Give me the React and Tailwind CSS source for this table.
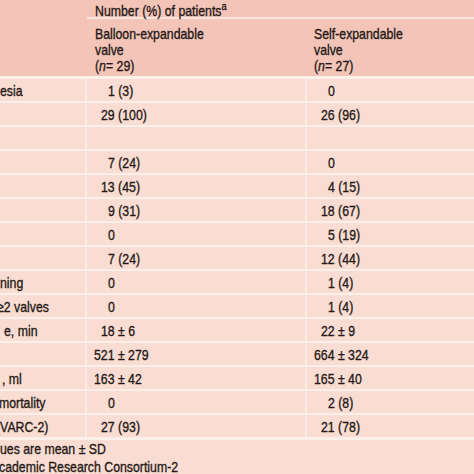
import React from 'react';

// values are indented so the integer parts line up, like the printed table
const PAD = { 1: 'pl-[21px]', 2: 'pl-[14px]', 3: 'pl-[7px]' };

// condensed face: no narrow font installed, so squeeze Liberation Sans
const Nar = ({ className = '', children }) => (
  <span className={`inline-block origin-left scale-x-[0.82] whitespace-nowrap ${className}`}>{children}</span>
);

const rows = [
  { label: 'esia', a: '1 (3)', b: '0' },
  { a: '29 (100)', b: '26 (96)' },
  {},
  { a: '7 (24)', b: '0' },
  { a: '13 (45)', b: '4 (15)' },
  { a: '9 (31)', b: '18 (67)' },
  { a: '0', b: '5 (19)' },
  { a: '7 (24)', b: '12 (44)' },
  { label: 'ning', a: '0', b: '1 (4)' },
  { label: '≥2 valves', a: '0', b: '1 (4)', shift: '-ml-[3px]' },
  { label: 'e, min', a: '18 ± 6', b: '22 ± 9', shift: 'ml-[4px]' },
  { a: '521 ± 279', b: '664 ± 324' },
  { label: ', ml', a: '163 ± 42', b: '165 ± 40', shift: 'ml-[2px]' },
  { label: 'mortality', a: '0', b: '2 (8)', shift: '-ml-[1px]' },
  { label: '(VARC-2)', a: '27 (93)', b: '21 (78)', shift: '-ml-[4px]' },
];

const Value = ({ v }) => {
  if (!v) return null;
  const digits = v.match(/^\d+/)[0].length;
  return (
    <div className={PAD[digits]}>
      <Nar>{v}</Nar>
    </div>
  );
};

export default function App() {
  return (
    <div className="w-[474px] h-[474px] overflow-hidden bg-[#f9ddd2] text-[#251815] text-[15px] [-webkit-text-stroke:0.35px_#251815] font-['Liberation_Sans',Arial,sans-serif]">
      {/* Header */}
      <div className="flex h-[79px] bg-[#f3c5b8] border-b-[3px] border-[#fdf0ea]">
        <div className="w-[87px] shrink-0" />
        <div className="flex-1 flex flex-col">
          <div className="h-[19px] border-b-2 border-[#fbe4dc] pl-[8px] leading-[21px]">
            <Nar>
              Number (%) of patients<sup>a</sup>
            </Nar>
          </div>
          <div className="flex flex-1">
            <div className="w-[220px] shrink-0 pl-[8px] pt-[7px] leading-[16px]">
              <Nar>
                Balloon-expandable
                <br />
                valve
                <br />(<i>n</i>= 29)
              </Nar>
            </div>
            <div className="flex-1 pl-[7px] pt-[7px] leading-[16px]">
              <Nar>
                Self-expandable
                <br />
                valve
                <br />(<i>n</i>= 27)
              </Nar>
            </div>
          </div>
        </div>
      </div>

      {/* Body rows */}
      {rows.map((r, i) => (
        <div
          key={i}
          className={`flex h-[24px] leading-[23px] border-[#fdf0ea] ${
            i === rows.length - 1 ? 'h-[25px] border-b-[3px]' : 'border-b-2'
          }`}
        >
          <div className="w-[87px] shrink-0 border-r-2 border-[#fcebe4] overflow-hidden">
            {r.label && <Nar className={r.shift || ''}>{r.label}</Nar>}
          </div>
          <div className="w-[220px] shrink-0 border-r-2 border-[#fcebe4]">
            <Value v={r.a} />
          </div>
          <div className="flex-1">
            <Value v={r.b} />
          </div>
        </div>
      ))}

      {/* Footnotes */}
      <div className="leading-[18px]">
        <div>
          <Nar>ues are mean ± SD</Nar>
        </div>
        <div>
          <Nar className="-ml-[1px]">cademic Research Consortium-2</Nar>
        </div>
      </div>
    </div>
  );
}
